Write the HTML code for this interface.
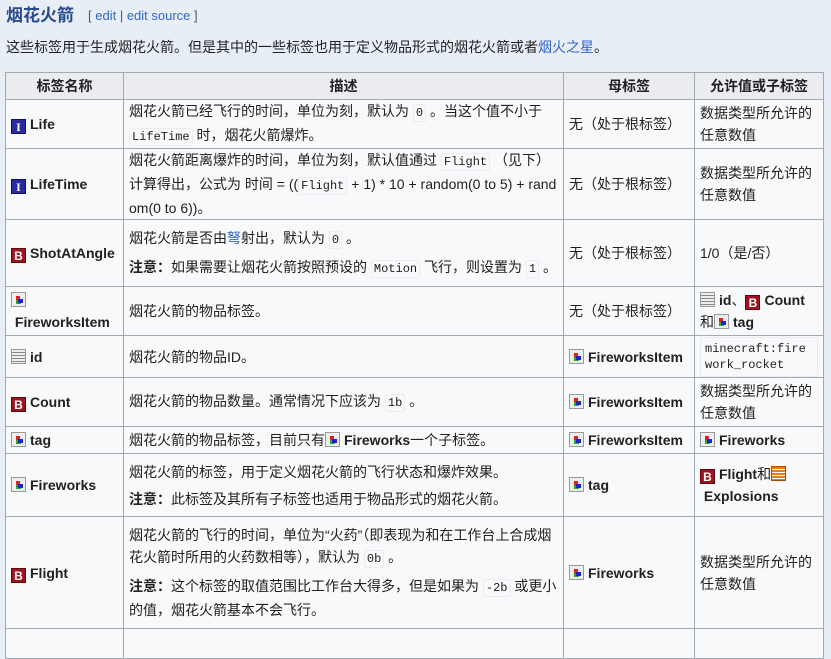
<!DOCTYPE html>
<html><head><meta charset="utf-8"><style>
html,body{margin:0;padding:0;}
body{width:831px;height:633px;overflow:hidden;background:#e8eef6;font-family:"Liberation Sans","Noto Sans CJK SC",sans-serif;font-size:14px;color:#202122;position:relative;}
h2{position:absolute;left:6px;top:4px;margin:0;font-size:17px;font-weight:bold;color:#2a4b8d;line-height:24px;}
h2 span{font-size:13px;font-weight:normal;color:#54595d;margin-left:14px;vertical-align:1px;}
h2 span a{color:#3366cc;}
p.intro{position:absolute;left:6px;top:37px;margin:0;line-height:20px;}
a{color:#3366cc;text-decoration:none;}
table{position:absolute;left:5px;top:72px;border-collapse:collapse;background:#f8f9fa;table-layout:fixed;}
td,th{border:1px solid #a2a9b1;padding:0 5px;line-height:22px;vertical-align:middle;overflow:hidden;}
th{background:#eaecf0;font-weight:bold;text-align:center;height:26px;}
code{font-family:"Liberation Mono","DejaVu Sans Mono",monospace;background:#f8f9fa;border:1px solid #eaecf0;border-radius:2px;padding:1px 2px;font-size:12px;}
b{font-weight:bold;}
.i{display:inline-block;width:15px;height:15px;vertical-align:-2px;margin-right:4px;box-sizing:border-box;text-align:center;color:#fff;font-weight:bold;font-size:12px;line-height:14px;}
.I{background:#2a2aa0;border:1px solid #101060;font-family:"Liberation Serif",serif;}
.B{background:#9e1420;border:1px solid #5a0a10;}
.c{border:1px solid #999;background:#eee;position:relative;}
.c:before{content:"";position:absolute;left:4px;top:3px;width:4px;height:4px;background:#e02020;}
.c:after{content:"";position:absolute;left:6px;top:6px;width:5px;height:4px;background:#2020d0;box-shadow:-2px 1px 0 #20b020;}
.s{border:1px solid #999;background:#eee;background-image:linear-gradient(#888 1px,transparent 1px);background-size:100% 3px;background-position:0 2px;}
.L{background:#e87d10;border:1px solid #a04f00;background-image:linear-gradient(#fff 1px,transparent 1px);background-size:100% 3px;background-position:0 2px;}
p{margin:0;}
.n{margin-top:5px;}
</style></head><body>
<h2>烟花火箭<span>[ <a>edit</a> | <a>edit source</a> ]</span></h2>
<p class="intro">这些标签用于生成烟花火箭。但是其中的一些标签也用于定义物品形式的烟花火箭或者<a>烟火之星</a>。</p>
<table>
<colgroup><col style="width:118px"><col style="width:440px"><col style="width:131px"><col style="width:129px"></colgroup>
<tr><th>标签名称</th><th>描述</th><th>母标签</th><th>允许值或子标签</th></tr>
<tr style="height:49px"><td><span class="i I">I</span><b>Life</b></td><td>烟花火箭已经飞行的时间，单位为刻，默认为 <code>0</code> 。当这个值不小于 <code>LifeTime</code> 时，烟花火箭爆炸。</td><td>无（处于根标签）</td><td>数据类型所允许的任意数值</td></tr>
<tr style="height:71px"><td><span class="i I">I</span><b>LifeTime</b></td><td style="word-break:break-all">烟花火箭距离爆炸的时间，单位为刻，默认值通过 <code>Flight</code> （见下）计算得出，公式为 时间 = ((<code>Flight</code> + 1) * 10 + random(0 to 5) + random(0 to 6))。</td><td>无（处于根标签）</td><td>数据类型所允许的任意数值</td></tr>
<tr style="height:67px"><td><span class="i B">B</span><b>ShotAtAngle</b></td><td><p>烟花火箭是否由<a>弩</a>射出，默认为 <code>0</code> 。</p><p class="n" style="white-space:nowrap"><b>注意：</b>如果需要让烟花火箭按照预设的 <code>Motion</code> 飞行，则设置为 <code>1</code> 。</p></td><td>无（处于根标签）</td><td>1/0（是/否）</td></tr>
<tr style="height:49px"><td><span class="i c"></span><br>&nbsp;<b>FireworksItem</b></td><td>烟花火箭的物品标签。</td><td>无（处于根标签）</td><td><span class="i s"></span><b>id</b>、<span class="i B">B</span><b>Count</b> 和<span class="i c"></span><b>tag</b></td></tr>
<tr style="height:42px"><td><span class="i s"></span><b>id</b></td><td>烟花火箭的物品ID。</td><td><span class="i c"></span><b>FireworksItem</b></td><td><code style="display:block;line-height:16px;padding:3px 4px;word-break:break-all">minecraft:firework_rocket</code></td></tr>
<tr style="height:49px"><td><span class="i B">B</span><b>Count</b></td><td>烟花火箭的物品数量。通常情况下应该为 <code>1b</code> 。</td><td><span class="i c"></span><b>FireworksItem</b></td><td>数据类型所允许的任意数值</td></tr>
<tr style="height:27px"><td><span class="i c"></span><b>tag</b></td><td>烟花火箭的物品标签，目前只有<span class="i c"></span><b>Fireworks</b>一个子标签。</td><td><span class="i c"></span><b>FireworksItem</b></td><td><span class="i c"></span><b>Fireworks</b></td></tr>
<tr style="height:63px"><td><span class="i c"></span><b>Fireworks</b></td><td><p>烟花火箭的标签，用于定义烟花火箭的飞行状态和爆炸效果。</p><p class="n"><b>注意：</b>此标签及其所有子标签也适用于物品形式的烟花火箭。</p></td><td><span class="i c"></span><b>tag</b></td><td><span class="i B">B</span><b>Flight</b>和<span class="i L"></span><br>&nbsp;<b>Explosions</b></td></tr>
<tr style="height:112px"><td><span class="i B">B</span><b>Flight</b></td><td><p>烟花火箭的飞行的时间，单位为“火药”（即表现为和在工作台上合成烟花火箭时所用的火药数相等），默认为 <code>0b</code> 。</p><p class="n"><b>注意：</b>这个标签的取值范围比工作台大得多，但是如果为 <code>-2b</code> 或更小的值，烟花火箭基本不会飞行。</p></td><td><span class="i c"></span><b>Fireworks</b></td><td>数据类型所允许的任意数值</td></tr>
<tr style="height:30px"><td></td><td></td><td></td><td></td></tr>
</table>
</body></html>
